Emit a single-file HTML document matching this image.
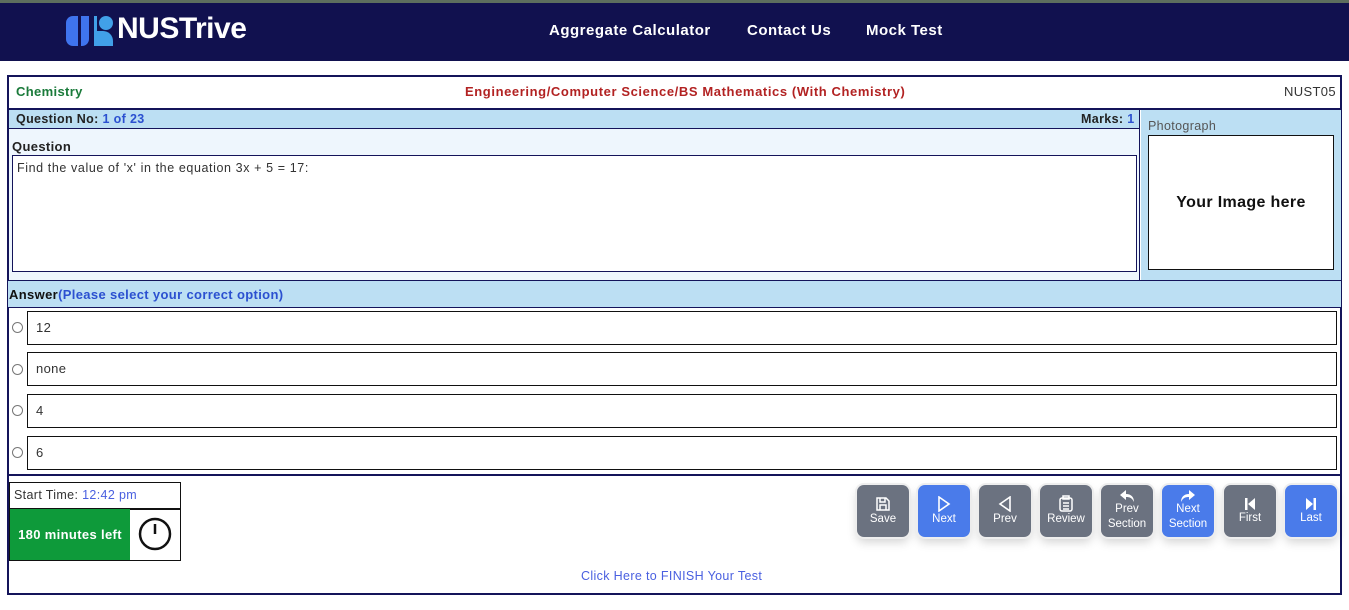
<!DOCTYPE html><html><head><style>
*{margin:0;padding:0;box-sizing:border-box}
body{width:1349px;height:610px;background:#fff;font-family:"Liberation Sans",sans-serif;position:relative;overflow:hidden;font-size:13px;color:#222;letter-spacing:0.35px}
.a{position:absolute}
.hdr{left:0;top:0;width:1349px;height:61px;background:#11114f;border-top:3px solid #5d6e5e}
.nav{color:#fff;font-weight:bold;font-size:15px;top:22px;letter-spacing:0.5px}
.btn{width:52px;height:52px;top:485px;border-radius:7px;color:#fff;font-size:11.5px;letter-spacing:0;text-align:center;box-shadow:0 0 0 2px #eee,0 5px 10px rgba(0,0,0,.18);display:flex;flex-direction:column;align-items:center;justify-content:center;line-height:15px}
.g{background:#6b7280}.b{background:#4a7bea}
.opt{left:27px;width:1310px;height:34px;border:1.5px solid #111;padding:8px 8px;font-size:13px;color:#333}
.rad{left:12px;width:11px;height:11px;border:1px solid #777;border-radius:50%}
</style></head><body>
<div class="a hdr"></div>
<svg class="a" style="left:66px;top:16px" width="48" height="30"><path d="M7 0h5v30H7a7 7 0 0 1-7-7V7a7 7 0 0 1 7-7z" fill="#3f74ee"/><path d="M15 0h8v23a7 7 0 0 1-7 7h-1z" fill="#3f74ee"/><rect x="28" y="0" width="3" height="30" fill="#41a0e8"/><circle cx="40" cy="7" r="7" fill="#41a0e8"/><path d="M31 15h6a10 10 0 0 1 10 10v5H31z" fill="#41a0e8"/></svg>
<div class="a" style="left:117px;top:12px;color:#fff;font-weight:bold;font-size:30px;letter-spacing:-0.5px">NUSTrive</div>
<div class="a nav" style="left:549px">Aggregate Calculator</div>
<div class="a nav" style="left:747px">Contact Us</div>
<div class="a nav" style="left:866px">Mock Test</div>

<div class="a" style="left:7px;top:75px;width:1335px;height:520px;border:2px solid #14145a"></div>
<div class="a" style="left:16px;top:84px;color:#1a7a3a;font-weight:bold">Chemistry</div>
<div class="a" style="left:465px;top:84px;color:#b22222;font-weight:bold;letter-spacing:0.6px">Engineering/Computer Science/BS Mathematics (With Chemistry)</div>
<div class="a" style="left:1284px;top:84px;color:#333">NUST05</div>
<div class="a" style="left:8px;top:108px;width:1333px;height:2px;background:#14145a"></div>
<div class="a" style="left:9px;top:110px;width:1131px;height:19px;background:#bcdff3;border-bottom:1.5px solid #14145a;border-right:1.5px solid #14145a"></div>
<div class="a" style="left:16px;top:112px;font-weight:bold;font-size:12.5px">Question No: <span style="color:#2b50d0">1 of 23</span></div>
<div class="a" style="left:1081px;top:112px;font-weight:bold;font-size:12.5px">Marks: <span style="color:#2b50d0">1</span></div>
<div class="a" style="left:9px;top:129px;width:1131px;height:151px;background:#eef6fd;border-right:1.5px solid #14145a"></div>
<div class="a" style="left:12px;top:139px;font-weight:bold;font-size:13px">Question</div>
<div class="a" style="left:12px;top:155px;width:1125px;height:117px;background:#fff;border:1px solid #14145a;padding:5px 4px;font-size:12.5px;color:#333;letter-spacing:0.6px">Find the value of 'x' in the equation 3x + 5 = 17:</div>
<div class="a" style="left:1141px;top:110px;width:200px;height:170px;background:#bcdff3"></div>
<div class="a" style="left:1148px;top:119px;color:#555;font-size:12.5px">Photograph</div>
<div class="a" style="left:1148px;top:135px;width:186px;height:135px;background:#fff;border:1.5px solid #111;display:flex;align-items:center;justify-content:center;font-weight:bold;font-size:16px;color:#111">Your Image here</div>
<div class="a" style="left:8px;top:280px;width:1333px;height:28px;background:#bcdff3;border-top:1.5px solid #14145a;border-bottom:1.5px solid #14145a"></div>
<div class="a" style="left:9px;top:287px;font-weight:bold;font-size:13px;color:#111">Answer<span style="color:#2b50d0">(Please select your correct option)</span></div>
<div class="a rad" style="top:322px"></div><div class="a opt" style="top:311px">12</div>
<div class="a rad" style="top:364px"></div><div class="a opt" style="top:352px">none</div>
<div class="a rad" style="top:405px"></div><div class="a opt" style="top:394px">4</div>
<div class="a rad" style="top:447px"></div><div class="a opt" style="top:436px">6</div>
<div class="a" style="left:8px;top:474px;width:1333px;height:1.5px;background:#14145a"></div>
<div class="a" style="left:9px;top:482px;width:172px;height:79px;border:1.5px solid #111"></div>
<div class="a" style="left:14px;top:488px;font-size:12.5px;color:#333">Start Time: <span style="color:#4a60e0">12:42 pm</span></div>
<div class="a" style="left:9px;top:508px;width:172px;height:1.5px;background:#111"></div>
<div class="a" style="left:10px;top:509px;width:120px;height:51px;background:#0e9a3a;color:#fff;font-weight:bold;font-size:13px;display:flex;align-items:center;justify-content:center">180 minutes left</div>
<svg class="a" style="left:138px;top:517px" width="34" height="34"><circle cx="17" cy="17" r="15" fill="none" stroke="#111" stroke-width="2.5"/><path d="M17 7v10" stroke="#111" stroke-width="2.5"/></svg>

<div class="a btn g" style="left:857px"><svg width="16" height="16" viewBox="0 0 16 16" fill="none" stroke="#fff" stroke-width="1.5"><path d="M2 2h9l3 3v9H2z M5 2v4h5V2 M5 14v-5h6v5"/></svg>Save</div>
<div class="a btn b" style="left:918px"><svg width="14" height="16" viewBox="0 0 14 16" fill="none" stroke="#fff" stroke-width="1.6"><path d="M2 1l10 7-10 7z"/></svg>Next</div>
<div class="a btn g" style="left:979px"><svg width="14" height="16" viewBox="0 0 14 16" fill="none" stroke="#fff" stroke-width="1.6"><path d="M12 1L2 8l10 7z"/></svg>Prev</div>
<div class="a btn g" style="left:1040px"><svg width="14" height="17" viewBox="0 0 14 17" fill="none" stroke="#fff" stroke-width="1.5"><rect x="1" y="3" width="12" height="13" rx="2"/><rect x="4" y="1" width="6" height="3"/><path d="M4 8h6M4 11h6M4 14h6"/></svg>Review</div>
<div class="a btn g" style="left:1101px"><svg width="14" height="12" viewBox="0 0 14 12"><path d="M6 0L0 5l6 5V7c4 0 6 1 8 5 0-5-3-8-8-8z" fill="#fff"/></svg>Prev<br>Section</div>
<div class="a btn b" style="left:1162px"><svg width="14" height="12" viewBox="0 0 14 12"><path d="M8 0l6 5-6 5V7c-4 0-6 1-8 5 0-5 3-8 8-8z" fill="#fff"/></svg>Next<br>Section</div>
<div class="a btn g" style="left:1224px"><svg width="12" height="14" viewBox="0 0 12 14"><path d="M1 1h2.5v12H1zM11 1L4 7l7 6z" fill="#fff"/></svg>First</div>
<div class="a btn b" style="left:1285px"><svg width="12" height="14" viewBox="0 0 12 14"><path d="M8.5 1H11v12H8.5zM1 1l7 6-7 6z" fill="#fff"/></svg>Last</div>
<div class="a" style="left:581px;top:569px;color:#4a60e0;font-size:12.5px">Click Here to FINISH Your Test</div>
</body></html>
